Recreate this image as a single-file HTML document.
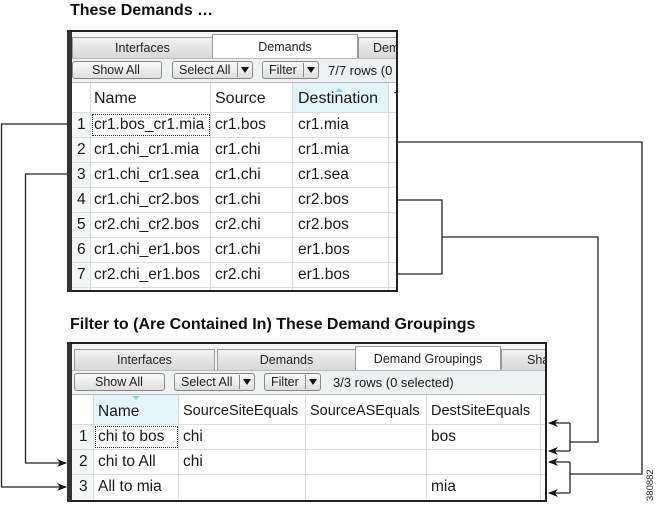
<!DOCTYPE html>
<html><head><meta charset="utf-8">
<style>
*{margin:0;padding:0;box-sizing:border-box}
body{width:656px;height:505px;background:#fff;position:relative;overflow:hidden;font-family:"Liberation Sans",sans-serif;color:#1a1a1a}
.a{position:absolute}
.h{font-weight:bold;font-size:16px;color:#111}
.tbl{position:absolute;border:2px solid #222;border-left:5px solid #333;background:#fff;overflow:hidden}
.tab{position:absolute;height:22px;background:linear-gradient(#f2f2f2,#d6d6d6);border:1px solid #9a9a9a;border-bottom:none;font-size:12.5px;text-align:center;line-height:21px;color:#222}
.tab.on{background:#fff;height:25px}
.bar{position:absolute;left:0;right:0;background:#eef1f2;border-top:1px solid #bbb}
.btn{position:absolute;height:18px;border:1px solid #888;border-radius:3px;background:linear-gradient(#fafafa,#dedede);font-size:12.5px;line-height:16px;color:#222;padding-left:6px}
.dd{position:absolute;top:1px;width:15px;height:14px;border-left:1px solid #888;}
.dd:after{content:"";position:absolute;left:3px;top:4px;border:4.5px solid transparent;border-top:6px solid #111}
.t{position:absolute;font-size:15.5px;white-space:nowrap;color:#1a1a1a}
.hd{font-size:16px}
.hb{font-size:14.5px}
.hl{position:absolute;height:1px;background:#d8dde0}
.vl{position:absolute;width:1px;background:#d8dde0}
.sel{position:absolute;border:1px dotted #333}
</style></head><body>

<div class="a h" style="left:70px;top:2px">These Demands …</div>
<div class="a h" style="left:70px;top:316px">Filter to (Are Contained In) These Demand Groupings</div>

<!-- top table -->
<div class="tbl" style="left:67px;top:30px;width:331px;height:262px">
  <div class="a" style="left:0;top:0;right:0;height:27px;background:#f4f6f6"></div>
  <div class="tab" style="left:0;top:5px;width:141px">Interfaces</div>
  <div class="tab on" style="left:140px;top:2px;width:146px;line-height:24px">Demands</div>
  <div class="tab" style="left:286px;top:5px;width:60px;text-align:left;padding-left:14px">Demands</div>
  <div class="bar" style="top:26px;height:24px"></div>
  <div class="btn" style="left:0;top:29px;width:90px;padding-left:19px">Show All</div>
  <div class="btn" style="left:100px;top:29px;width:81px">Select All<div class="dd" style="left:64px"></div></div>
  <div class="btn" style="left:190px;top:29px;width:57px">Filter<div class="dd" style="left:40px"></div></div>
  <div class="t" style="left:256px;top:31px;font-size:13px">7/7 rows (0 selected)</div>
  <div class="a" style="left:0;top:50px;right:0;height:30px;border-top:1px solid #bbb;background:#fff"></div>
  <div class="a" style="left:221px;top:51px;width:95px;height:29px;background:#e4f5f8"></div>
  <div class="a" style="left:263px;top:52px;border:4px solid transparent;border-bottom:4px solid #8fcfdc"></div>
  <div class="t hd" style="left:22px;top:58px">Name</div>
  <div class="t hd" style="left:143px;top:58px">Source</div>
  <div class="t hd" style="left:226px;top:58px">Destination</div>
  <div class="t hd" style="left:322px;top:58px">T</div>
  <div class="a" style="left:0;top:80px;width:18px;height:180px;background:#f5f6f6"></div>
  <div class="vl" style="left:18px;top:51px;height:210px"></div>
  <div class="vl" style="left:138px;top:51px;height:210px"></div>
  <div class="vl" style="left:220px;top:51px;height:210px"></div>
  <div class="vl" style="left:316px;top:51px;height:210px"></div>
  <div class="hl" style="left:0;right:0;top:80px"></div>
  <div class="hl" style="left:0;right:0;top:105px"></div>
  <div class="hl" style="left:0;right:0;top:130px"></div>
  <div class="hl" style="left:0;right:0;top:155px"></div>
  <div class="hl" style="left:0;right:0;top:180px"></div>
  <div class="hl" style="left:0;right:0;top:205px"></div>
  <div class="hl" style="left:0;right:0;top:230px"></div>
  <div class="hl" style="left:0;right:0;top:255px"></div>
  <div class="sel" style="left:20px;top:82px;width:118px;height:22px"></div>
  <div class="t" style="left:5px;top:84px">1</div><div class="t" style="left:22px;top:84px">cr1.bos_cr1.mia</div><div class="t" style="left:143px;top:84px">cr1.bos</div><div class="t" style="left:226px;top:84px">cr1.mia</div>
  <div class="t" style="left:5px;top:109px">2</div><div class="t" style="left:22px;top:109px">cr1.chi_cr1.mia</div><div class="t" style="left:143px;top:109px">cr1.chi</div><div class="t" style="left:226px;top:109px">cr1.mia</div>
  <div class="t" style="left:5px;top:134px">3</div><div class="t" style="left:22px;top:134px">cr1.chi_cr1.sea</div><div class="t" style="left:143px;top:134px">cr1.chi</div><div class="t" style="left:226px;top:134px">cr1.sea</div>
  <div class="t" style="left:5px;top:159px">4</div><div class="t" style="left:22px;top:159px">cr1.chi_cr2.bos</div><div class="t" style="left:143px;top:159px">cr1.chi</div><div class="t" style="left:226px;top:159px">cr2.bos</div>
  <div class="t" style="left:5px;top:184px">5</div><div class="t" style="left:22px;top:184px">cr2.chi_cr2.bos</div><div class="t" style="left:143px;top:184px">cr2.chi</div><div class="t" style="left:226px;top:184px">cr2.bos</div>
  <div class="t" style="left:5px;top:209px">6</div><div class="t" style="left:22px;top:209px">cr1.chi_er1.bos</div><div class="t" style="left:143px;top:209px">cr1.chi</div><div class="t" style="left:226px;top:209px">er1.bos</div>
  <div class="t" style="left:5px;top:234px">7</div><div class="t" style="left:22px;top:234px">cr2.chi_er1.bos</div><div class="t" style="left:143px;top:234px">cr2.chi</div><div class="t" style="left:226px;top:234px">er1.bos</div>
</div>

<!-- bottom table -->
<div class="tbl" style="left:67px;top:342px;width:480px;height:160px">
  <div class="a" style="left:0;top:0;right:0;height:27px;background:#f4f6f6"></div>
  <div class="tab" style="left:2px;top:5px;width:141px">Interfaces</div>
  <div class="tab" style="left:145px;top:5px;width:139px">Demands</div>
  <div class="tab on" style="left:283px;top:2px;width:146px;line-height:24px">Demand Groupings</div>
  <div class="tab" style="left:429px;top:5px;width:60px;text-align:left;padding-left:25px">Shared</div>
  <div class="bar" style="top:26px;height:24px"></div>
  <div class="btn" style="left:2px;top:29px;width:91px;padding-left:20px">Show All</div>
  <div class="btn" style="left:102px;top:29px;width:81px">Select All<div class="dd" style="left:64px"></div></div>
  <div class="btn" style="left:192px;top:29px;width:57px">Filter<div class="dd" style="left:40px"></div></div>
  <div class="t" style="left:261px;top:31px;font-size:13px">3/3 rows (0 selected)</div>
  <div class="a" style="left:0;top:50px;right:0;height:30px;border-top:1px solid #bbb;background:#fff"></div>
  <div class="a" style="left:21px;top:51px;width:85px;height:29px;background:#e4f5f8"></div>
  <div class="a" style="left:60px;top:52px;border:4px solid transparent;border-top:4px solid #8fcfdc"></div>
  <div class="t hb" style="left:26px;top:59px;font-size:15.5px">Name</div>
  <div class="t hb" style="left:111px;top:59px">SourceSiteEquals</div>
  <div class="t hb" style="left:238px;top:59px">SourceASEquals</div>
  <div class="t hb" style="left:359px;top:59px">DestSiteEquals</div>
  <div class="a" style="left:0;top:80px;width:21px;height:80px;background:#f5f6f6"></div>
  <div class="vl" style="left:21px;top:51px;height:110px"></div>
  <div class="vl" style="left:106px;top:51px;height:110px"></div>
  <div class="vl" style="left:233px;top:51px;height:110px"></div>
  <div class="vl" style="left:354px;top:51px;height:110px"></div>
  <div class="vl" style="left:468px;top:51px;height:110px"></div>
  <div class="hl" style="left:0;right:0;top:80px"></div>
  <div class="hl" style="left:0;right:0;top:105px"></div>
  <div class="hl" style="left:0;right:0;top:130px"></div>
  <div class="sel" style="left:23px;top:82px;width:83px;height:22px"></div>
  <div class="t" style="left:7px;top:84px">1</div><div class="t" style="left:26px;top:84px">chi to bos</div><div class="t" style="left:111px;top:84px">chi</div><div class="t" style="left:359px;top:84px">bos</div>
  <div class="t" style="left:7px;top:109px">2</div><div class="t" style="left:26px;top:109px">chi to All</div><div class="t" style="left:111px;top:109px">chi</div>
  <div class="t" style="left:7px;top:134px">3</div><div class="t" style="left:26px;top:134px">All to mia</div><div class="t" style="left:359px;top:134px">mia</div>
</div>

<svg class="a" style="left:0;top:0" width="656" height="505" viewBox="0 0 656 505">
<defs><marker id="ar" markerWidth="10" markerHeight="8" refX="9" refY="4" orient="auto" markerUnits="userSpaceOnUse"><path d="M0,0 L10,4 L0,8 L3,4 Z" fill="#111"/></marker></defs>
<g fill="none" stroke="#222" stroke-width="1.3">
<path d="M67,124 H1.5 V487 H66" marker-end="url(#ar)"/>
<path d="M67,174 H25.5 V463 H66" marker-end="url(#ar)"/>
<path d="M398,142 H642 V474 H570"/>
<path d="M398,200 H442 V274 H398"/>
<path d="M442,237 H598 V442 H570"/>
<path d="M570,423 V451"/>
<path d="M570,462 V493"/>
<path d="M570,423 H549" marker-end="url(#ar)"/>
<path d="M570,451 H549" marker-end="url(#ar)"/>
<path d="M570,462 H549" marker-end="url(#ar)"/>
<path d="M570,493 H549" marker-end="url(#ar)"/>
</g>
<text x="0" y="0" transform="translate(653,501) rotate(-90)" font-family="Liberation Sans,sans-serif" font-size="9.5" fill="#222">380882</text>
</svg>
</body></html>
